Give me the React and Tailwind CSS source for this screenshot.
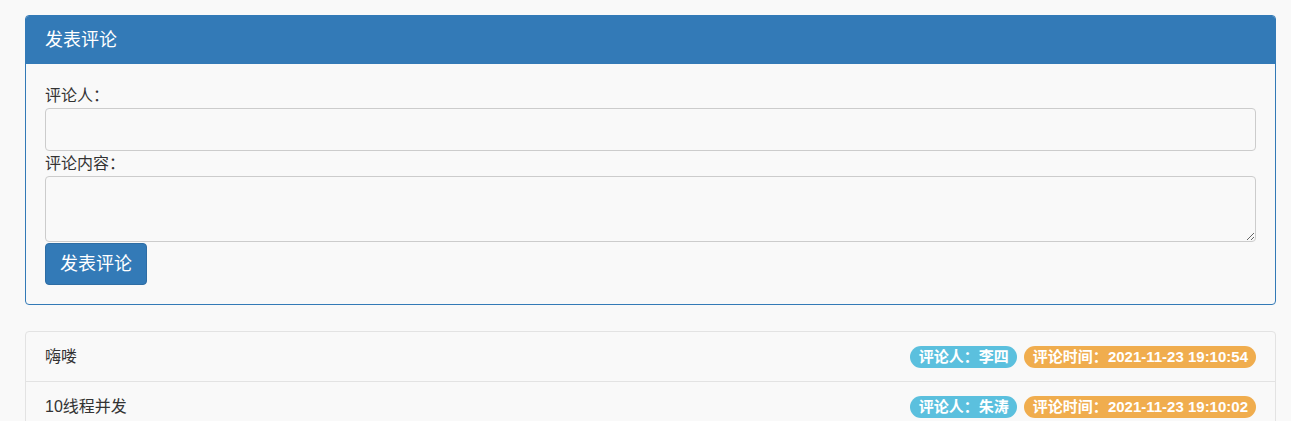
import { useState } from "react";

const comments = [
  { id: 1, content: "嗨喽", author: "李四", time: "2021-11-23 19:10:54" },
  { id: 2, content: "10线程并发", author: "朱涛", time: "2021-11-23 19:10:02" },
];

export default function App() {
  const [author, setAuthor] = useState("");
  const [content, setContent] = useState("");

  return (
    <div className="min-h-[421px] bg-[#f9f9f9] pt-[15px] pl-[25px] font-['Liberation_Sans','Noto_Sans_CJK_SC',sans-serif] text-[#333]">
      <div className="w-[1251px] rounded-[4px] border border-[#337ab7] bg-[#f9f9f9]">
        <div className="flex h-[48px] items-center rounded-t-[3px] bg-[#337ab7] px-[19px] text-[18px] leading-none text-white">
          发表评论
        </div>
        <form className="px-[19px] pt-[19px] pb-[19px]" onSubmit={(e) => e.preventDefault()}>
          <label className="block h-[25px] text-[16px] leading-[25px]">评论人：</label>
          <input
            value={author}
            onChange={(e) => setAuthor(e.target.value)}
            className="block h-[43px] w-full rounded-[4px] border border-[#ccc] bg-[#f9f9f9] px-3 text-[16px] outline-none"
          />
          <label className="block h-[25px] text-[16px] leading-[25px]">评论内容：</label>
          <textarea
            value={content}
            onChange={(e) => setContent(e.target.value)}
            className="block h-[66px] w-full rounded-[4px] border border-[#ccc] bg-[#f9f9f9] px-3 text-[16px] outline-none"
          />
          <button
            type="submit"
            className="mt-px flex h-[42px] w-[102px] items-center justify-center rounded-[4px] border border-[#2e6da4] bg-[#337ab7] text-[18px] leading-none text-white"
          >
            发表评论
          </button>
        </form>
      </div>

      <ul className="mt-[26px] w-[1251px] rounded-[4px] border border-[#e3e3e3] bg-[#f9f9f9]">
        {comments.map((c) => (
          <li
            key={c.id}
            className="flex h-[50px] items-center justify-between border-b border-[#e3e3e3] px-[19px] text-[16px]"
          >
            <span>{c.content}</span>
            <span className="flex gap-[7px] text-[15px] font-bold leading-[22px] text-white">
              <span className="rounded-full bg-[#5bc0de] pl-[9px] pr-2">评论人：{c.author}</span>
              <span className="rounded-full bg-[#f0ad4e] pl-[9px] pr-2">评论时间：{c.time}</span>
            </span>
          </li>
        ))}
      </ul>
    </div>
  );
}
